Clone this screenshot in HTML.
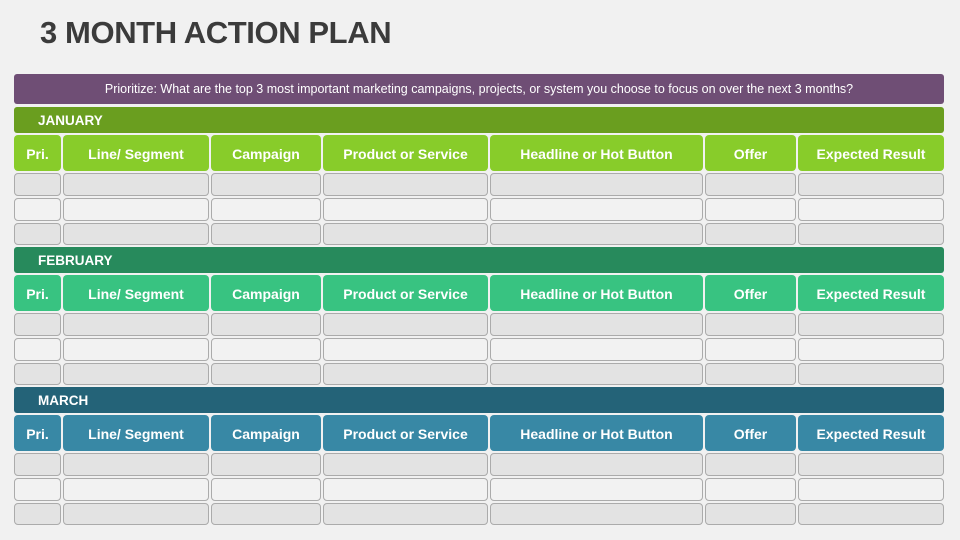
<!DOCTYPE html>
<html><head><style>
*{margin:0;padding:0;box-sizing:border-box}
body{width:960px;height:540px;background:#f1f1f1;font-family:"Liberation Sans",Calibri,sans-serif;position:relative;overflow:hidden}
h1{position:absolute;left:40px;top:15px;font-size:31px;font-weight:bold;color:#3b3b3b;letter-spacing:-0.4px}
.pri{position:absolute;left:14px;top:74px;width:930px;height:30px;background:#6f4e75;border-radius:3px;color:#fff;font-size:12.5px;text-align:center;line-height:30px}
.bar{position:absolute;left:14px;width:930px;height:26px;border-radius:3px;color:#fff;font-weight:bold;font-size:13.5px;line-height:28px;padding-left:24px}
.g{position:absolute;left:13px;width:932px;display:grid;grid-template-columns:49px 148px 112px 167px 215px 93px 148px;grid-template-rows:38px 25px 25px 24px}
.g div{margin:1px;border-radius:4px}
.h{color:#fff;font-weight:bold;font-size:14px;text-align:center;line-height:39px}
.c1{background:#e3e3e3;border:1.5px solid #ababab}
.c2{background:#f2f2f2;border:1.5px solid #ababab}
.jan .h{background:#88cc2a}.feb .h{background:#38c381}.mar .h{background:#3888a5}
</style></head><body>
<h1>3 MONTH ACTION PLAN</h1>
<div class="pri">Prioritize: What are the top 3 most important marketing campaigns, projects, or system you choose to focus on over the next 3 months?</div>

<div class="bar" style="top:107px;background:#6a9e1f">JANUARY</div>
<div class="g jan" style="top:134px">
<div class="h">Pri.</div><div class="h">Line/ Segment</div><div class="h">Campaign</div><div class="h">Product or Service</div><div class="h">Headline or Hot Button</div><div class="h">Offer</div><div class="h">Expected Result</div>
<div class="c1"></div><div class="c1"></div><div class="c1"></div><div class="c1"></div><div class="c1"></div><div class="c1"></div><div class="c1"></div>
<div class="c2"></div><div class="c2"></div><div class="c2"></div><div class="c2"></div><div class="c2"></div><div class="c2"></div><div class="c2"></div>
<div class="c1"></div><div class="c1"></div><div class="c1"></div><div class="c1"></div><div class="c1"></div><div class="c1"></div><div class="c1"></div>
</div>

<div class="bar" style="top:247px;background:#278a5c">FEBRUARY</div>
<div class="g feb" style="top:274px">
<div class="h">Pri.</div><div class="h">Line/ Segment</div><div class="h">Campaign</div><div class="h">Product or Service</div><div class="h">Headline or Hot Button</div><div class="h">Offer</div><div class="h">Expected Result</div>
<div class="c1"></div><div class="c1"></div><div class="c1"></div><div class="c1"></div><div class="c1"></div><div class="c1"></div><div class="c1"></div>
<div class="c2"></div><div class="c2"></div><div class="c2"></div><div class="c2"></div><div class="c2"></div><div class="c2"></div><div class="c2"></div>
<div class="c1"></div><div class="c1"></div><div class="c1"></div><div class="c1"></div><div class="c1"></div><div class="c1"></div><div class="c1"></div>
</div>

<div class="bar" style="top:387px;background:#246378">MARCH</div>
<div class="g mar" style="top:414px">
<div class="h">Pri.</div><div class="h">Line/ Segment</div><div class="h">Campaign</div><div class="h">Product or Service</div><div class="h">Headline or Hot Button</div><div class="h">Offer</div><div class="h">Expected Result</div>
<div class="c1"></div><div class="c1"></div><div class="c1"></div><div class="c1"></div><div class="c1"></div><div class="c1"></div><div class="c1"></div>
<div class="c2"></div><div class="c2"></div><div class="c2"></div><div class="c2"></div><div class="c2"></div><div class="c2"></div><div class="c2"></div>
<div class="c1"></div><div class="c1"></div><div class="c1"></div><div class="c1"></div><div class="c1"></div><div class="c1"></div><div class="c1"></div>
</div>
</body></html>
